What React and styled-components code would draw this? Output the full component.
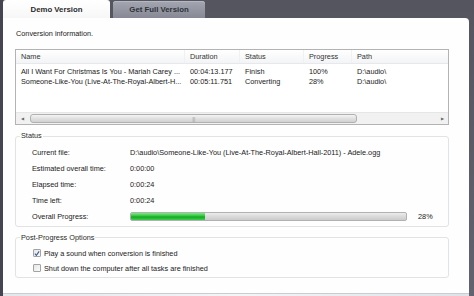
import React from 'react';
import styled, { createGlobalStyle } from 'styled-components';

const GlobalStyle = createGlobalStyle`
  html, body {
    margin: 0;
    padding: 0;
    background: #5a5a67;
  }
  body {
    font-family: "Liberation Sans", Arial, sans-serif;
    color: #1a1a1a;
  }
`;

const Frame = styled.div`
  width: 474px;
  height: 296px;
  display: flex;
  flex-direction: column;
  background: linear-gradient(to bottom, #55555f, #62626f);
  box-shadow: inset 3px 0 0 #45454f;
  overflow: hidden;
`;

const TabBar = styled.div`
  height: 18px;
  display: flex;
  align-items: flex-end;
  gap: 3px;
  padding-left: 3px;
`;

const Tab = styled.div`
  height: ${(p) => (p.$active ? 18 : 17)}px;
  width: ${(p) => p.$width}px;
  display: flex;
  align-items: center;
  justify-content: center;
  font-size: 7.8px;
  font-weight: bold;
  color: ${(p) => (p.$active ? '#2b2b2b' : '#2e3038')};
  border-radius: 3px 3px 0 0;
  background: ${(p) =>
    p.$active
      ? 'linear-gradient(to bottom, #ffffff, #f7f7f7)'
      : 'linear-gradient(to bottom, #a3a6b0, #868995)'};
  box-shadow: ${(p) => (p.$active ? 'none' : 'inset 0 1px 0 #b6b8c1')};
`;

const Panel = styled.div`
  flex: 1;
  margin: 0 5px 0 3px;
  background: #fefefe;
  border-radius: 0 4px 0 0;
  padding: 11px 20px 0 12px;
  display: flex;
  flex-direction: column;
  border-bottom: 1px solid #c9ccd2;
`;

const BottomStrip = styled.div`
  height: 2px;
  margin: 0 5px 0 3px;
  background: linear-gradient(to right, #e4e7ec, #f4f5f7, #dfe3e8);
`;

const Caption = styled.div`
  font-size: 7.3px;
  line-height: 10px;
  padding-left: 1px;
  margin-bottom: 10px;
`;

const Table = styled.div`
  height: 76px;
  box-sizing: border-box;
  border: 1px solid #b3b3b3;
  display: flex;
  flex-direction: column;
  background: #fff;
`;

const cols = '169px 55px 64px 48px 1fr';

const HeaderRow = styled.div`
  display: grid;
  grid-template-columns: ${cols};
  height: 13px;
  background: linear-gradient(to bottom, #ffffff, #f3f4f6);
  border-bottom: 1px solid #e6e8eb;
`;

const HeaderCell = styled.div`
  font-size: 7.3px;
  line-height: 13px;
  padding-left: 5px;
  border-right: 1px solid ${(p) => (p.$last ? 'transparent' : '#f0f1f3')};
  color: #333;
`;

const Rows = styled.div`
  flex: 1;
  padding-top: 3px;
`;

const Row = styled.div`
  display: grid;
  grid-template-columns: ${cols};
  height: 10px;
`;

const Cell = styled.div`
  font-size: 7.3px;
  line-height: 10px;
  padding-left: 5px;
  white-space: nowrap;
  overflow: hidden;
`;

const ScrollBar = styled.div`
  height: 11px;
  display: flex;
  align-items: center;
  background: #f1f1f1;
  border-top: 1px solid #e6e6e6;
`;

const ScrollArrow = styled.div`
  width: 12px;
  display: flex;
  justify-content: center;
  font-size: 4px;
  color: #666;
`;

const ScrollTrack = styled.div`
  flex: 1;
  height: 9px;
  display: flex;
`;

const ScrollThumb = styled.div`
  width: 327px;
  margin-left: 2px;
  height: 100%;
  box-sizing: border-box;
  border: 1px solid #b0b0b0;
  border-radius: 3px;
  background: linear-gradient(to bottom, #f4f4f4, #e0e0e0 50%, #d2d2d2);
  display: flex;
  justify-content: center;
  align-items: center;
  font-size: 5px;
  letter-spacing: -0.5px;
  color: #a0a0a0;
`;

const Group = styled.fieldset`
  margin: 6px 0 0;
  padding: 3px 4px 1px;
  border: 1px solid #e1e3e6;
  border-radius: 3px;
  min-width: 0;
`;

const Legend = styled.legend`
  font-size: 7.3px;
  line-height: 10px;
  padding: 0 1px;
  color: #2a2a2a;
`;

const InfoRow = styled.div`
  display: grid;
  grid-template-columns: 98px 1fr auto;
  align-items: center;
  height: 16.2px;
  padding-left: 12px;
  padding-right: 16px;
  font-size: 7.3px;
`;

const Value = styled.div`
  white-space: nowrap;
`;

const Progress = styled.div`
  display: flex;
  align-items: center;
  gap: 11px;
`;

const Track = styled.div`
  width: 277px;
  height: 9px;
  box-sizing: border-box;
  border: 1px solid #b1b1b1;
  border-radius: 2px;
  background: linear-gradient(to bottom, #ececec, #dadada 50%, #cbcbcb);
  overflow: hidden;
`;

const Fill = styled.div`
  height: 100%;
  background: linear-gradient(to bottom, #7ee884, #2ac43a 45%, #13a623 55%, #3ed04c);
`;

const CheckRow = styled.label`
  display: flex;
  align-items: center;
  gap: 3px;
  height: 15px;
  padding-left: 13px;
  font-size: 7.3px;
`;

const Box = styled.span`
  width: 8px;
  height: 8px;
  box-sizing: border-box;
  border: 1px solid #a3a3a3;
  border-radius: 1px;
  background: linear-gradient(to bottom right, #e6e6e6, #fafafa);
  display: flex;
  align-items: center;
  justify-content: center;
`;

const Check = () => (
  <svg width="7" height="7" viewBox="0 0 7 7">
    <path d="M1 3.6 L2.8 5.6 L6 1" fill="none" stroke="#3a5c9a" strokeWidth="1.3" />
  </svg>
);

const files = [
  ['All I Want For Christmas Is You - Mariah Carey ...', '00:04:13.177', 'Finish', '100%', 'D:\\audio\\'],
  ['Someone-Like-You (Live-At-The-Royal-Albert-H...', '00:05:11.751', 'Converting', '28%', 'D:\\audio\\'],
];

const info = [
  ['Current file:', 'D:\\audio\\Someone-Like-You (Live-At-The-Royal-Albert-Hall-2011) - Adele.ogg'],
  ['Estimated overall time:', '0:00:00'],
  ['Elapsed time:', '0:00:24'],
  ['Time left:', '0:00:24'],
];

const App = () => {
  const progress = 28;
  return (
    <Frame>
      <GlobalStyle />
      <TabBar>
        <Tab $active $width={107}>Demo Version</Tab>
        <Tab $width={92}>Get Full Version</Tab>
      </TabBar>
      <Panel>
        <Caption>Conversion information.</Caption>
        <Table>
          <HeaderRow>
            {['Name', 'Duration', 'Status', 'Progress', 'Path'].map((h, i) => (
              <HeaderCell key={h} $last={i === 4}>{h}</HeaderCell>
            ))}
          </HeaderRow>
          <Rows>
            {files.map((f) => (
              <Row key={f[0]}>
                {f.map((c, i) => <Cell key={i}>{c}</Cell>)}
              </Row>
            ))}
          </Rows>
          <ScrollBar>
            <ScrollArrow>◀</ScrollArrow>
            <ScrollTrack>
              <ScrollThumb>|||</ScrollThumb>
            </ScrollTrack>
            <ScrollArrow>▶</ScrollArrow>
          </ScrollBar>
        </Table>

        <Group>
          <Legend>Status</Legend>
          {info.map(([k, v]) => (
            <InfoRow key={k}>
              <div>{k}</div>
              <Value>{v}</Value>
            </InfoRow>
          ))}
          <InfoRow>
            <div>Overall Progress:</div>
            <Progress>
              <Track>
                <Fill style={{ width: `${progress - 1}%` }} />
              </Track>
              <span>{progress}%</span>
            </Progress>
          </InfoRow>
        </Group>

        <Group>
          <Legend>Post-Progress Options</Legend>
          <CheckRow>
            <Box><Check /></Box>
            Play a sound when conversion is finished
          </CheckRow>
          <CheckRow>
            <Box />
            Shut down the computer after all tasks are finished
          </CheckRow>
        </Group>
      </Panel>
      <BottomStrip />
    </Frame>
  );
};

export default App;
